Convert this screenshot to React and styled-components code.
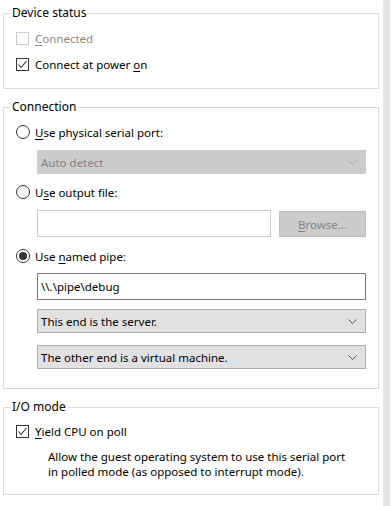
import React from "react";
import styled, { createGlobalStyle } from "styled-components";

const GlobalStyle = createGlobalStyle`
	html, body {
		margin: 0;
		padding: 0;
		background: #ffffff;
	}
	body {
		font-family: "Noto Sans", "Liberation Sans", sans-serif;
		font-size: 11.5px;
		color: #000000;
	}
`;

const Page = styled.div`
	display: flex;
	width: 392px;
	height: 506px;
	overflow: hidden;
`;

const Content = styled.div`
	width: 376px;
	padding-left: 3px;
	margin-right: 4px;
`;

const ScrollStrip = styled.div`
	width: 7px;
	background: #e6e6e6;
`;

const Group = styled.fieldset`
	margin: ${(p) => p.$top}px 0 0 0;
	padding: 0;
	border: 1px solid #dcdcdc;
	min-width: 0;
`;

const Legend = styled.legend`
	margin-left: 6px;
	padding: 0 2px;
	line-height: 16px;
	height: 16px;
	font-size: 12px;
`;

const Body = styled.div`
	padding: ${(p) => p.$pad};
	display: flex;
	flex-direction: column;
`;

const Row = styled.label`
	display: flex;
	align-items: center;
	gap: 6px;
	height: ${(p) => p.$h || 26}px;
	margin-top: ${(p) => p.$mt || 0}px;
	color: ${(p) => (p.$disabled ? "#8c8c8c" : "#000")};
	white-space: nowrap;
`;

const Box = styled.span`
	width: 13px;
	height: 13px;
	box-sizing: border-box;
	border: 1px solid ${(p) => (p.$disabled ? "#cccccc" : "#333333")};
	background: #fff;
	display: flex;
	align-items: center;
	justify-content: center;
	flex: none;
`;

const Radio = styled.span`
	width: 14px;
	height: 14px;
	box-sizing: border-box;
	border: 1px solid #333333;
	border-radius: 50%;
	background: #fff;
	display: flex;
	align-items: center;
	justify-content: center;
	flex: none;
	margin-right: -1px;
	&::after {
		content: "";
		display: ${(p) => (p.$on ? "block" : "none")};
		width: 8px;
		height: 8px;
		border-radius: 50%;
		background: #333333;
	}
`;

const Key = styled.span`
	text-decoration: underline;
	text-underline-offset: 2px;
`;

const Indent = styled.div`
	margin-left: 21px;
	margin-top: ${(p) => p.$mt || 0}px;
	display: flex;
	gap: 8px;
`;

const Combo = styled.div`
	flex: 1;
	height: ${(p) => p.$h || 24}px;
	box-sizing: border-box;
	border: 1px solid ${(p) => (p.$disabled ? "#cccccc" : "#adadad")};
	background: ${(p) => (p.$disabled ? "#cccccc" : "#e1e1e1")};
	color: ${(p) => (p.$disabled ? "#838383" : "#000")};
	display: flex;
	align-items: center;
	justify-content: space-between;
	padding: 0 8px 0 3px;
`;

const TextBox = styled.div`
	flex: 1;
	height: ${(p) => p.$h || 27}px;
	box-sizing: border-box;
	border: 1px solid ${(p) => (p.$disabled ? "#cccccc" : "#7a7a7a")};
	background: #fff;
	display: flex;
	align-items: center;
	padding: 0 3px;
`;

const Button = styled.div`
	width: 87px;
	height: 26px;
	margin-top: 1px;
	box-sizing: border-box;
	border: 1px solid #bfbfbf;
	background: #cccccc;
	color: #838383;
	display: flex;
	align-items: center;
	justify-content: center;
`;

const Note = styled.p`
	margin: 5px 0 0 32px;
	line-height: 15px;
`;

const Check = ({ color = "#333" }) => (
	<svg width="11" height="11" viewBox="0 0 11 11">
		<polyline points="1.5,5.5 4,8.5 9.5,2" fill="none" stroke={color} strokeWidth="1.1" />
	</svg>
);

const Chevron = ({ color }) => (
	<svg width="9" height="5" viewBox="0 0 9 5">
		<polyline points="0.5,0.5 4.5,4.5 8.5,0.5" fill="none" stroke={color} strokeWidth="1" />
	</svg>
);

export default function App() {
	return (
		<Page>
			<GlobalStyle />
			<Content>
				<Group $top={5}>
					<Legend>Device status</Legend>
					<Body $pad="4px 12px 11px 12px">
						<Row $disabled>
							<Box $disabled />
							<span>
								<Key>C</Key>onnected
							</span>
						</Row>
						<Row>
							<Box>
								<Check />
							</Box>
							<span>
								Connect at power <Key>o</Key>n
							</span>
						</Row>
					</Body>
				</Group>

				<Group $top={10}>
					<Legend>Connection</Legend>
					<Body $pad="5px 12px 19px 12px">
						<Row $h={24}>
							<Radio />
							<span>
								<Key>U</Key>se physical serial port:
							</span>
						</Row>
						<Indent $mt={6}>
							<Combo $disabled>
								<span>Auto detect</span>
								<Chevron color="#a6a6a6" />
							</Combo>
						</Indent>
						<Row $h={24} $mt={6}>
							<Radio />
							<span>
								U<Key>s</Key>e output file:
							</span>
						</Row>
						<Indent $mt={6}>
							<TextBox $disabled />
							<Button>
								<span>
									<Key>B</Key>rowse...
								</span>
							</Button>
						</Indent>
						<Row $h={24} $mt={7}>
							<Radio $on />
							<span>
								Use <Key>n</Key>amed pipe:
							</span>
						</Row>
						<Indent $mt={5}>
							<TextBox $h={27}>\\.\pipe\debug</TextBox>
						</Indent>
						<Indent $mt={9}>
							<Combo>
								<span>This end is the server.</span>
								<Chevron color="#555" />
							</Combo>
						</Indent>
						<Indent $mt={12}>
							<Combo>
								<span>The other end is a virtual machine.</span>
								<Chevron color="#555" />
							</Combo>
						</Indent>
					</Body>
				</Group>

				<Group $top={10}>
					<Legend>I/O mode</Legend>
					<Body $pad="3px 12px 15px 12px">
						<Row>
							<Box>
								<Check />
							</Box>
							<span>
								<Key>Y</Key>ield CPU on poll
							</span>
						</Row>
						<Note>
							Allow the guest operating system to use this serial port
							<br />
							in polled mode (as opposed to interrupt mode).
						</Note>
					</Body>
				</Group>
			</Content>
			<ScrollStrip />
		</Page>
	);
}
